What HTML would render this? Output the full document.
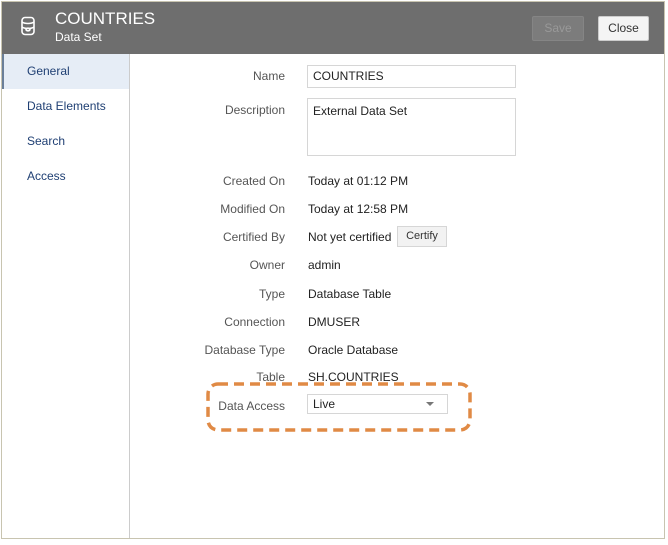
<!DOCTYPE html>
<html><head><style>
body{margin:0;width:668px;height:545px;background:#fff;font-family:"Liberation Sans",sans-serif;position:relative;overflow:hidden}
.frame{position:absolute;left:1px;top:1px;width:664px;height:538px;border:1px solid #c8c4b0;box-sizing:border-box}
.hdr{position:absolute;left:2px;top:2px;width:662px;height:52px;background:#6e6e6e}
.t1{position:absolute;left:55px;top:9px;color:#fff;font-size:17px}
.t2{position:absolute;left:55px;top:30px;color:#fff;font-size:12px}
.btn{position:absolute;top:16px;height:23px;font-size:12px;text-align:center;line-height:23px;border-radius:2px}
.nav{position:absolute;left:2px;top:54px;width:127px;height:484px;border-right:1px solid #ccc}
.nav div{height:35px;line-height:35px;padding-left:25px;font-size:12px;color:#1f3f73}
.nav .sel{background:#e6edf6;border-left:2px solid #6a7f99;padding-left:23px}
.l{position:absolute;right:383px;font-size:12px;color:#555;text-align:right}
.v{position:absolute;left:308px;font-size:12px;color:#222}
.box{position:absolute;border:1px solid #d6d6d6;background:#fff;box-sizing:border-box}
</style></head><body>
<div class="frame"></div>
<div class="hdr">
<svg style="position:absolute;left:18px;top:14px" width="16" height="20" viewBox="0 0 16 20" fill="none" stroke="#fff" stroke-width="1.6"><rect x="2" y="1.5" width="12" height="17" rx="3"/><path d="M2 6c3 2 9 2 12 0M2 11c3 2 9 2 12 0"/><ellipse cx="8" cy="13.5" rx="2" ry="1.3"/></svg>
</div>
<div class="t1">COUNTRIES</div>
<div class="t2">Data Set</div>
<div class="btn" style="left:532px;width:50px;background:#7c7c7c;color:#999;border:1px solid #858585">Save</div>
<div class="btn" style="left:598px;width:49px;background:#f4f4f4;color:#333;border:1px solid #ccc">Close</div>
<div class="nav"><div class="sel">General</div><div>Data Elements</div><div>Search</div><div>Access</div></div>
<div class="l" style="top:69px">Name</div>
<div class="box" style="left:307px;top:65px;width:209px;height:23px"></div><div class="v" style="top:69px;left:313px">COUNTRIES</div>
<div class="l" style="top:103px">Description</div>
<div class="box" style="left:307px;top:98px;width:209px;height:58px"></div><div class="v" style="top:104px;left:313px">External Data Set</div>
<div class="l" style="top:174px">Created On</div><div class="v" style="top:174px">Today at 01:12 PM</div>
<div class="l" style="top:202px">Modified On</div><div class="v" style="top:202px">Today at 12:58 PM</div>
<div class="l" style="top:230px">Certified By</div><div class="v" style="top:230px">Not yet certified</div>
<div class="box" style="left:397px;top:226px;width:50px;height:21px;background:#f2f2f2;font-size:11px;text-align:center;line-height:19px;color:#333">Certify</div>
<div class="l" style="top:258px">Owner</div><div class="v" style="top:258px">admin</div>
<div class="l" style="top:287px">Type</div><div class="v" style="top:287px">Database Table</div>
<div class="l" style="top:315px">Connection</div><div class="v" style="top:315px">DMUSER</div>
<div class="l" style="top:343px">Database Type</div><div class="v" style="top:343px">Oracle Database</div>
<div class="l" style="top:370px">Table</div><div class="v" style="top:370px">SH.COUNTRIES</div>
<div class="l" style="top:399px">Data Access</div>
<div class="box" style="left:307px;top:394px;width:141px;height:20px"></div><div class="v" style="top:397px;left:313px">Live</div>
<div style="position:absolute;left:426px;top:402px;border:4px solid transparent;border-top:4px solid #777;border-bottom:0"></div>
<svg style="position:absolute;left:205px;top:381px" width="268" height="52"><rect x="3" y="3" width="262" height="46" rx="10" fill="none" stroke="#e08a45" stroke-width="3.5" stroke-dasharray="10 6"/></svg>
</body></html>
